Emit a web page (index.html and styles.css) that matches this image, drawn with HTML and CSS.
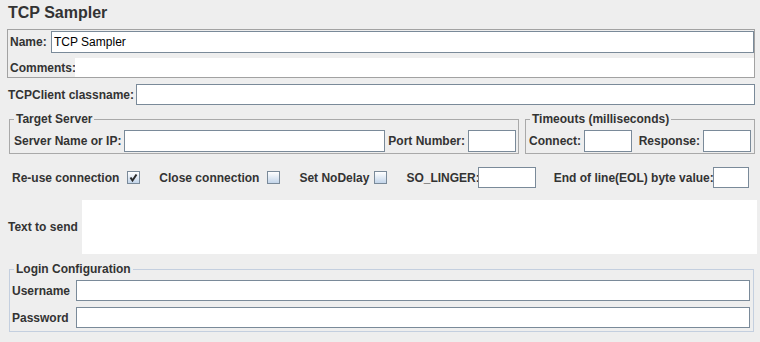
FILE: index.html
```html
<!DOCTYPE html>
<html lang="en">

<head>
    <meta charset="utf-8">
    <meta name="viewport" content="width=device-width, initial-scale=1.0">
    <title>TCP Sampler</title>
    <link rel="stylesheet" href="styles.css">
</head>

<body>
    <h1 class="title">TCP Sampler</h1>

    <div class="panel">
        <div class="name-row">
            <label class="name-label">Name:</label>
            <input class="field grow" type="text" value="TCP Sampler">
        </div>
        <div class="comments-row">
            <label class="comments-label">Comments:</label>
            <div class="comments-area"></div>
        </div>
    </div>

    <div class="classname-row">
        <label class="classname-label">TCPClient classname:</label>
        <input class="field grow" type="text">
    </div>

    <div class="group-row">
        <fieldset class="group target">
            <legend>Target Server</legend>
            <div class="group-body">
                <label>Server Name or IP:</label>
                <input class="field grow" type="text">
                <label>Port Number:</label>
                <input class="field small" type="text">
            </div>
        </fieldset>
        <fieldset class="group timeouts">
            <legend>Timeouts (milliseconds)</legend>
            <div class="group-body">
                <label>Connect:</label>
                <input class="field small" type="text">
                <label class="push">Response:</label>
                <input class="field small" type="text">
            </div>
        </fieldset>
    </div>

    <div class="options-row">
        <label>Re-use connection</label>
        <span class="check on">
            <svg width="11" height="11" viewBox="0 0 11 11">
                <path d="M2.5 5.5 L4.5 8.5 L8.5 2.5" fill="none" stroke="#2b2b2b" stroke-width="2"/>
            </svg>
        </span>
        <label class="opt">Close connection</label>
        <span class="check"></span>
        <label class="opt">Set NoDelay</label>
        <span class="check nodelay"></span>
        <label class="opt">SO_LINGER:</label>
        <input class="field linger" type="text">
        <label class="eol-label">End of line(EOL) byte value:</label>
        <input class="field eol" type="text">
    </div>

    <div class="send-row">
        <label class="send-label">Text to send</label>
        <div class="send-area"></div>
    </div>

    <fieldset class="group login">
        <legend>Login Configuration</legend>
        <div class="login-row">
            <label class="login-label">Username</label>
            <input class="field grow" type="text">
        </div>
        <div class="login-row">
            <label class="login-label">Password</label>
            <input class="field grow" type="password">
        </div>
    </fieldset>
</body>

</html>
```

FILE: styles.css
```css
* {
    box-sizing: border-box;
}

body {
    margin: 0;
    background-color: #eeeeee;
    color: #333333;
    font-family: "Liberation Sans", Arial, sans-serif;
    font-size: 12px;
    font-weight: bold;
}

label {
    white-space: nowrap;
}

.title {
    margin: 0;
    padding: 3px 8px 0;
    font-size: 16px;
    line-height: 20px;
    height: 23px;
}

.field {
    appearance: none;
    height: 22px;
    margin: 0;
    padding: 0 2px;
    border: 1px solid #7a8a99;
    background-color: #fff;
    font-family: "Liberation Sans", Arial, sans-serif;
    font-size: 12px;
    font-weight: normal;
    color: #000;
    outline: none;
}

.grow {
    flex: 1;
    min-width: 0;
}

.small {
    width: 48px;
}

/* name + comments */

.panel {
    margin: 6px 5px 0 7px;
    padding: 1px 0 0 2px;
    border: 1px solid #a2a2a2;
}

.name-row {
    display: flex;
    align-items: center;
    height: 22px;
}

.name-label {
    width: 41px;
}

.comments-row {
    display: flex;
    align-items: center;
    height: 19px;
    margin-top: 5px;
}

.comments-label {
    width: 65px;
}

.comments-area {
    flex: 1;
    height: 19px;
    background-color: #fff;
}

.classname-row {
    display: flex;
    align-items: center;
    margin: 6px 5px 0 8px;
}

.classname-row .field {
    height: 21px;
}

.classname-label {
    width: 128px;
}

/* grouped boxes */

.group-row {
    display: flex;
    gap: 6px;
    margin: 7px 5px 0 9px;
}

.group {
    margin: 0;
    min-width: 0;
    border: 1px solid #a9a9a9;
    padding: 4px 2px 0 4px;
}

.group legend {
    padding: 0 2px;
    line-height: 14px;
}

.target {
    flex: 1;
}

.timeouts {
    width: 230px;
    padding: 4px 3px 0 3px;
}

.timeouts legend {
    margin-left: 1px;
}

.group-body {
    display: flex;
    align-items: center;
    gap: 3px;
    height: 23px;
    padding-bottom: 1px;
}

.push {
    margin-left: auto;
}

/* options */

.options-row {
    display: flex;
    align-items: center;
    height: 21px;
    margin: 13px 0 0 12px;
}

.check {
    display: inline-flex;
    align-items: center;
    justify-content: center;
    width: 13px;
    height: 13px;
    margin-left: 8px;
    border: 1px solid #7a8a99;
    background: linear-gradient(#ffffff, #c3d5ea);
}

.opt {
    margin-left: 19px;
}

.nodelay {
    margin-left: 5px;
}

.linger {
    width: 58px;
    height: 21px;
    margin-left: -2px;
}

.eol-label {
    margin-left: 18px;
}

.eol {
    width: 36px;
    height: 21px;
    margin-left: -1px;
}

/* text to send */

.send-row {
    display: flex;
    align-items: center;
    margin: 12px 3px 0 8px;
}

.send-label {
    width: 74px;
}

.send-area {
    flex: 1;
    height: 54px;
    background-color: #fff;
}

/* login */

.login {
    margin: 8px 6px 0 9px;
    padding: 4px 3px 3px 2px;
    border-color: #c4cfdf;
}

.login legend {
    margin-left: 2px;
}

.login-row {
    display: flex;
    align-items: center;
}

.login-row + .login-row {
    margin-top: 6px;
}

.login-row .field {
    height: 21px;
}

.login-label {
    width: 64px;
}
```
